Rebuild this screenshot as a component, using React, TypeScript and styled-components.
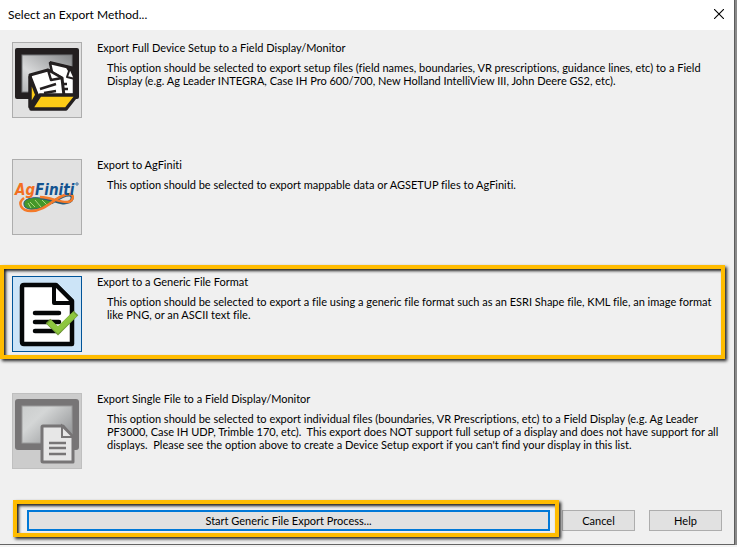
import React from 'react';
import styled, { createGlobalStyle, css } from 'styled-components';

const GlobalStyle = createGlobalStyle`
  *, *::before, *::after { box-sizing: border-box; }
  body {
    margin: 0;
    background: #f3f3f3;
    color: #000;
    font: 11px/13px Lato, Tahoma, sans-serif;
    font-variant-ligatures: none;
  }
  button { font: inherit; color: inherit; padding: 0; margin: 0; border-radius: 0; }
`;

const Desktop = styled.div`
  display: grid;
  grid-template-columns: minmax(0, 1fr) 2px;
  background: #8a8a8a;
`;

const Dialog = styled.main`
  border-right: 1px solid #5c5c5c;
  border-bottom: 1px solid #646464;
  background: #f0f0f0;
`;

const TitleBar = styled.header`
  display: flex;
  align-items: center;
  justify-content: space-between;
  height: 30px;
  padding: 0 8px 2px;
  background: #fff;
`;

const Title = styled.h1`
  margin: 0;
  font: inherit;
  font-size: 12px;
`;

const CloseButton = styled.button`
  display: grid;
  place-items: center;
  width: 14px;
  height: 14px;
  border: 0;
  background: none;
`;

const Options = styled.div`
  display: grid;
  grid-template-columns: minmax(0, 1fr);
  gap: 41px;
  padding: 12px 12px 41px;
`;

const Option = styled.section`
  position: relative;
  display: flex;
  gap: 15px;
`;

type Tone = 'normal' | 'active' | 'muted';

const tones = {
  normal: css`background: #e1e1e1; border-color: #adadad;`,
  active: css`background: #cce4f7; border-color: #005499;`,
  muted: css`background: #cccccc; border-color: #bfbfbf;`,
};

const IconButton = styled.button<{ $tone: Tone }>`
  flex: none;
  width: 70px;
  height: 76px;
  border: 1px solid;
  ${({ $tone }) => tones[$tone]}
  svg { display: block; width: 68px; height: 74px; }
`;

const OptionText = styled.div`
  min-width: 0;
`;

const OptionTitle = styled.h2`
  margin: 0 0 8px;
  font: inherit;
  line-height: 11px;
`;

const Description = styled.p`
  margin: 0 0 0 10px;
  white-space: pre;
`;

const Highlight = styled.span<{ $inset: string }>`
  position: absolute;
  inset: ${({ $inset }) => $inset};
  border: 4px solid #ffbc00;
  box-shadow: 2px 2px 3px #222, inset 2px 2px 3px #222;
  pointer-events: none;
`;

const Footer = styled.footer`
  display: flex;
  gap: 14px;
  padding: 0 12px 13px 27px;
`;

const StartArea = styled.div`
  position: relative;
  display: flex;
  flex: 1;
  margin-right: -2px;
`;

const PushButton = styled.button<{ $primary?: boolean }>`
  flex: ${({ $primary }) => ($primary ? '1' : 'none')};
  width: 73px;
  height: 21px;
  border: ${({ $primary }) => ($primary ? '2px solid #0078d7' : '1px solid #adadad')};
  background: #e1e1e1;
`;

const DeviceFolderIcon = () => (
  <svg viewBox="0 0 68 74" aria-hidden="true">
    <defs>
      <linearGradient id="screen" x1="0" y1="1" x2="1" y2="0">
        <stop offset="0" stopColor="#b5b6b8" />
        <stop offset=".35" stopColor="#d8d9da" />
        <stop offset="1" stopColor="#858789" />
      </linearGradient>
    </defs>
    <rect x="2" y="5" width="64" height="51" rx="2" fill="#231f20" />
    <rect x="9" y="12" width="50" height="37" fill="url(#screen)" stroke="#77787b" />
    <path d="M37 18 62 24 63 52H40Z" fill="#231f20" />
    <path d="M37 20 54 24 61 35V52H44Z" fill="#fff" stroke="#231f20" strokeWidth="2.5" strokeLinejoin="round" />
    <path d="M57 25 54 34 62 36Z" fill="#fff" stroke="#231f20" strokeWidth="2" strokeLinejoin="round" />
    <path d="M17 32 35 27 49 35 51 53 20 58Z" fill="#fff" stroke="#231f20" strokeWidth="3" strokeLinejoin="round" />
    <path d="M35 27 38 37 49 35Z" fill="#fff" stroke="#231f20" strokeWidth="2.5" strokeLinejoin="round" />
    <path d="m27 46 16-5M31 50l12-2M50 41h4M51 46h4" fill="none" stroke="#231f20" strokeWidth="2.5" />
    <path d="M17 34V64L24 52Z" fill="#fccb16" stroke="#231f20" strokeWidth="3.5" strokeLinejoin="round" />
    <path d="M27 52H64L53 66H18Z" fill="#fccb16" stroke="#231f20" strokeWidth="3.5" strokeLinejoin="round" />
  </svg>
);

const AgFinitiIcon = () => (
  <svg viewBox="0 0 68 74" role="img" aria-label="AgFiniti">
    <path d="M13 40C20 35 34 39 41 42 32 48 17 52 12 47 10 44 11 41 13 40Z" fill="#459729" stroke="#265b7b" />
    <path d="m17 42 5 5m0-7 6 7m1-7 5 5m-19-2 3 5" stroke="#acd87d" strokeWidth="1" />
    <path d="M27 38C38 37 47 46 56 42 60 40 60 36 57 35 51 34 45 39 38 43" fill="none" stroke="#265b7b" strokeWidth="3" />
    <path d="M11 38C4 43 8 51 18 51 35 51 43 34 57 34 62 35 60 42 54 42 44 42 38 37 27 37" fill="none" stroke="#f47a2a" strokeWidth="2.5" />
    <text x="2" y="35" fontFamily="DejaVu Sans Condensed, Noto Sans, sans-serif" fontWeight="bold" fontStyle="italic" fontSize="15"><tspan fill="#f36f21">Ag</tspan><tspan fill="#135390">Finiti</tspan></text>
    <circle cx="64" cy="24" r="1.2" fill="#e1e1e1" stroke="#135390" strokeWidth=".8" />
  </svg>
);

const GenericFileIcon = () => (
  <svg viewBox="0 0 68 74" aria-hidden="true">
    <path d="M11 8H43L59 24V67H11Q9 67 9 65V10Q9 8 11 8Z" fill="#fff" stroke="#050708" strokeWidth="4.5" strokeLinejoin="round" />
    <path d="M41 8V26H59V24L43 8Z" fill="#fff" stroke="#050708" strokeWidth="4" strokeLinejoin="round" />
    <path d="M22 36H46M22 45H46M22 54H46" stroke="#050708" strokeWidth="4.5" strokeLinecap="round" />
    <path d="m35 44 10 10 18-18" fill="none" stroke="#709936" strokeWidth="6.5" />
    <path d="m36 45 9 8 17-16" fill="none" stroke="#8dc63f" strokeWidth="5.5" />
  </svg>
);

const DeviceFileIcon = () => (
  <svg viewBox="0 0 68 74" aria-hidden="true">
    <defs>
      <linearGradient id="mutedScreen" x1="0" y1="0" x2="1" y2=".8">
        <stop offset="0" stopColor="#cbcdcd" />
        <stop offset=".35" stopColor="#d4d6d6" />
        <stop offset="1" stopColor="#929496" />
      </linearGradient>
    </defs>
    <rect x="2" y="5" width="64" height="51" rx="3" fill="#777576" />
    <rect x="9" y="12" width="50" height="37" fill="url(#mutedScreen)" stroke="#9b9c9c" />
    <path d="M30 32H50L60 43V68H30Q29 68 29 67V33Q29 32 30 32Z" fill="#e7e7e7" stroke="#777576" strokeWidth="3" strokeLinejoin="round" />
    <path d="M49 32V43H60Z" fill="#e7e7e7" stroke="#777576" strokeWidth="2" />
    <path d="M36 49H53M36 54H53M36 60H53" stroke="#777576" strokeWidth="2.5" />
  </svg>
);

const options: {
  title: string;
  lines: string[];
  tone: Tone;
  Icon: React.ComponentType;
}[] = [
  {
    title: 'Export Full Device Setup to a Field Display/Monitor',
    lines: [
      'This option should be selected to export setup files (field names, boundaries, VR prescriptions, guidance lines, etc) to a Field',
      'Display (e.g. Ag Leader INTEGRA, Case IH Pro 600/700, New Holland IntelliView III, John Deere GS2, etc).',
    ],
    tone: 'normal',
    Icon: DeviceFolderIcon,
  },
  {
    title: 'Export to AgFiniti',
    lines: ['This option should be selected to export mappable data or AGSETUP files to AgFiniti.'],
    tone: 'normal',
    Icon: AgFinitiIcon,
  },
  {
    title: 'Export to a Generic File Format',
    lines: [
      'This option should be selected to export a file using a generic file format such as an ESRI Shape file, KML file, an image format',
      'like PNG, or an ASCII text file.',
    ],
    tone: 'active',
    Icon: GenericFileIcon,
  },
  {
    title: 'Export Single File to a Field Display/Monitor',
    lines: [
      'This option should be selected to export individual files (boundaries, VR Prescriptions, etc) to a Field Display (e.g. Ag Leader',
      'PF3000, Case IH UDP, Trimble 170, etc).  This export does NOT support full setup of a display and does not have support for all',
      "displays.  Please see the option above to create a Device Setup export if you can't find your display in this list.",
    ],
    tone: 'muted',
    Icon: DeviceFileIcon,
  },
];

export default function App() {
  return (
    <>
      <GlobalStyle />
      <Desktop>
        <Dialog>
          <TitleBar>
            <Title>Select an Export Method...</Title>
            <CloseButton aria-label="Close">
              <svg width="10" height="10" viewBox="0 0 10 10" aria-hidden="true">
                <path d="M0 0 10 10M10 0 0 10" stroke="#000" strokeWidth="1.1" />
              </svg>
            </CloseButton>
          </TitleBar>
          <Options>
            {options.map(({ title, lines, tone, Icon }) => (
              <Option key={title}>
                <IconButton $tone={tone} aria-label={title}>
                  <Icon />
                </IconButton>
                <OptionText>
                  <OptionTitle>{title}</OptionTitle>
                  <Description>{lines.join('\n')}</Description>
                </OptionText>
                {tone === 'active' && <Highlight $inset="-11px -3px -7px -12px" />}
              </Option>
            ))}
          </Options>
          <Footer>
            <StartArea>
              <PushButton $primary>Start Generic File Export Process...</PushButton>
              <Highlight $inset="-10px -9px -6px -14px" />
            </StartArea>
            <PushButton>Cancel</PushButton>
            <PushButton>Help</PushButton>
          </Footer>
        </Dialog>
      </Desktop>
    </>
  );
}
